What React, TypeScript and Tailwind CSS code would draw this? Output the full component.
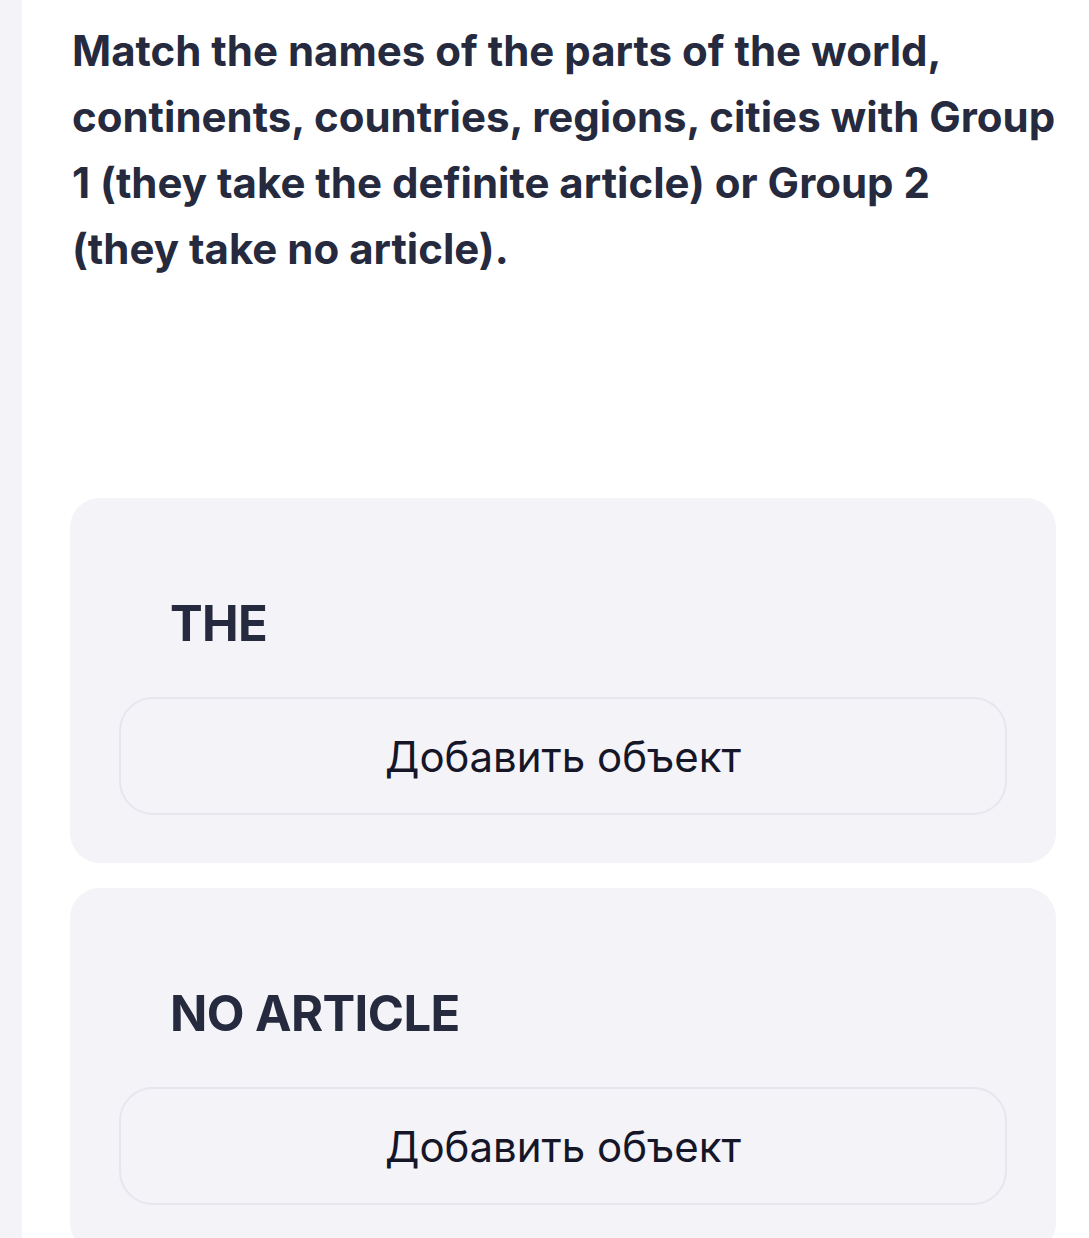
import React from 'react';

interface GroupCardProps {
    title: string;
}

const GroupCard: React.FC<GroupCardProps> = ({ title }) => {
    return (
        <div className="bg-[#f3f3f8] rounded-[30px] pt-[96px] pb-[48px] px-[49px]">
            <h2 className="pl-[51px] text-[49px] leading-[60px] font-bold text-[#262a3e] tracking-[-0.6px]">
                {title}
            </h2>
            <button className="mt-[43px] w-full h-[118px] rounded-[34px] border-2 border-[#e6e6ee] bg-[#f3f3f8] flex items-center justify-center text-[42px] text-[#151628]">
                Добавить объект
            </button>
        </div>
    );
};

export default function App() {
    return (
        <div className="min-h-[1238px] flex bg-white" style={{ fontFamily: 'Inter, "Noto Sans", sans-serif' }}>
            <div className="w-[22px] shrink-0 bg-[#f3f3f8]" />
            <div className="flex-1 pl-[48px] pr-[33px] pt-[18px]">
                <h1 className="text-[42px] leading-[66px] font-bold text-[#262a3e] pl-[2px] -mr-[20px]">
                    Match the names of the parts of the world, continents, countries, regions, cities with Group 1 (they take the definite article) or Group 2
                    <br />
                    (they take no article).
                </h1>
                <div className="mt-[216px] flex flex-col gap-[25px]">
                    <GroupCard title="THE" />
                    <GroupCard title="NO ARTICLE" />
                </div>
            </div>
        </div>
    );
}
